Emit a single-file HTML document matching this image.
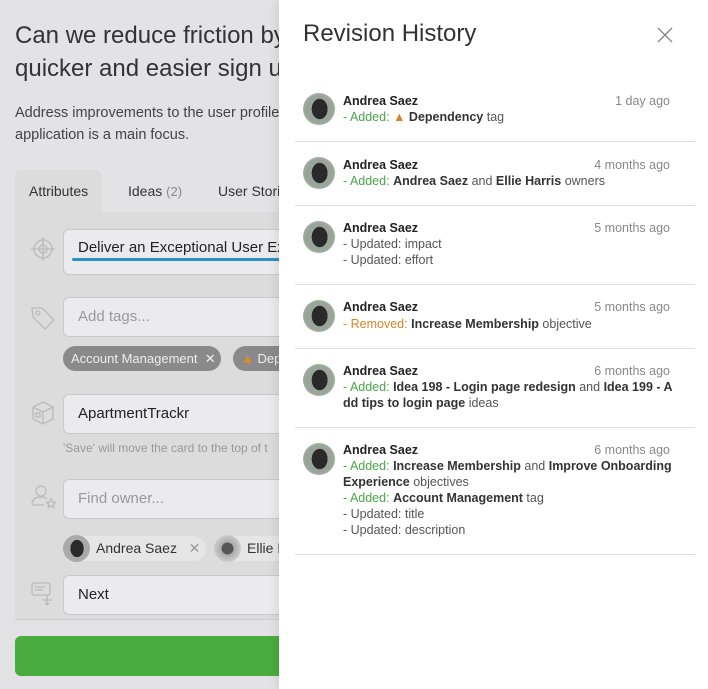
<!DOCTYPE html>
<html><head><style>
*{margin:0;padding:0;box-sizing:border-box}
body{width:708px;height:689px;overflow:hidden;background:#e3e2e5;font-family:"Liberation Sans","DejaVu Sans",sans-serif;position:relative;color:#333}
.a{position:absolute;white-space:nowrap}
.inp{position:absolute;left:63px;width:240px;background:#ebeaec;border:1px solid #c9c9c9;border-radius:6px;font-size:15px;color:#222;padding-left:14px;white-space:nowrap;overflow:hidden}
.ph{color:#999}
.ic{position:absolute;left:30px;color:#b5b5b5}
.panel{position:absolute;left:279px;top:0;width:429px;height:689px;background:#fff;box-shadow:-3px 0 8px rgba(0,0,0,.08)}
.e{position:absolute;left:16px;width:400px;border-bottom:1px solid #dedede;font-size:12.5px;line-height:16px}
.av{position:absolute;left:8px;width:32px;height:32px;border-radius:50%;background:radial-gradient(ellipse 35% 45% at 52% 50%,#2a2a2a 0 70%,transparent 72%),radial-gradient(circle at 50% 50%,#9aa59a 0 60%,#c8c8c8 100%)}
.nm{position:absolute;left:48px;font-weight:bold;color:#222}
.tm{position:absolute;right:25px;color:#888}
.ln{position:absolute;left:48px;right:20px;color:#555}
.g{color:#4aa84a}.o{color:#d9832a}
b{color:#333}
</style></head><body>
<div class="a" style="left:15px;top:19px;font-size:24px;line-height:33px;color:#333">Can we reduce friction by<br>quicker and easier sign up</div>
<div class="a" style="left:15px;top:102px;font-size:14.5px;line-height:22px;color:#444">Address improvements to the user profile<br>application is a main focus.</div>
<div class="a" style="left:15px;top:170px;width:87px;height:44px;background:#dcdcdd;border-radius:6px 6px 0 0"></div>
<div class="a" style="left:29px;top:183px;font-size:14px;color:#333">Attributes</div>
<div class="a" style="left:128px;top:183px;font-size:14px;color:#333">Ideas <span style="color:#888;font-size:13px">(2)</span></div>
<div class="a" style="left:218px;top:183px;font-size:14px;color:#333">User Stori</div>
<div class="a" style="left:15px;top:212px;width:270px;height:408px;background:#dcdcdd;border-bottom:1px solid #cfcfcf"></div>
<div class="inp" style="top:229px;height:46px;padding-top:9px">Deliver an Exceptional User Experi<div class="a" style="left:8px;top:28px;width:240px;height:3px;background:#2b8fc8;border-radius:2px"></div></div>
<svg class="ic" style="top:236px" width="26" height="26" viewBox="0 0 26 26" fill="none" stroke="#bbb" stroke-width="1.3"><circle cx="13" cy="13" r="9"/><circle cx="13" cy="13" r="4"/><path d="M13 1v24M1 13h24"/></svg>
<div class="inp ph" style="top:297px;height:40px;padding-top:10px">Add tags...</div>
<svg class="ic" style="top:305px" width="26" height="26" viewBox="0 0 26 26" fill="none" stroke="#bbb" stroke-width="1.3"><path d="M2 3l10 0 12 12-9 9L3 12z"/><circle cx="8" cy="8" r="2"/></svg>
<div class="a" style="left:63px;top:346px;width:158px;height:25px;background:#8a8a8a;border-radius:13px;color:#eee;font-size:13px;padding:5px 0 0 8px">Account Management&nbsp; ✕</div>
<div class="a" style="left:233px;top:346px;width:60px;height:25px;background:#8a8a8a;border-radius:13px;color:#eee;font-size:13px;padding:5px 0 0 8px"><span style="color:#e08a20">▲</span> Dep</div>
<div class="inp" style="top:394px;height:40px;padding-top:10px">ApartmentTrackr</div>
<svg class="ic" style="top:400px" width="26" height="26" viewBox="0 0 26 26" fill="none" stroke="#bbb" stroke-width="1.3"><path d="M3 7l10-5 10 5v12l-10 5-10-5z M3 7l10 5 10-5 M13 12v12"/><rect x="6" y="13" width="4" height="4"/></svg>
<div class="a" style="left:63px;top:441px;font-size:12px;color:#999">'Save' will move the card to the top of t</div>
<div class="inp ph" style="top:479px;height:40px;padding-top:10px">Find owner...</div>
<svg class="ic" style="top:483px" width="28" height="28" viewBox="0 0 28 28" fill="none" stroke="#bbb" stroke-width="1.3"><circle cx="11" cy="8" r="5"/><path d="M2 22c0-6 4-8 9-8 3 0 5 1 6 2M2 22h12"/><path d="M21 16l1.5 3 3 .4-2.2 2 .6 3-2.9-1.5-2.9 1.5.6-3-2.2-2 3-.4z"/></svg>
<div class="a" style="left:63px;top:536px;width:143px;height:25px;background:#e6e6e7;border-radius:13px;font-size:14px;color:#333;padding:4px 0 0 33px">Andrea Saez&nbsp;&nbsp; <span style="color:#999">✕</span></div>
<div class="a" style="left:63px;top:535px;width:27px;height:27px;border-radius:50%;background:radial-gradient(ellipse 35% 45% at 52% 50%,#2a2a2a 0 70%,transparent 72%),#aaa"></div>
<div class="a" style="left:214px;top:536px;width:80px;height:25px;background:#e6e6e7;border-radius:13px;font-size:14px;color:#333;padding:4px 0 0 33px">Ellie H</div>
<div class="a" style="left:214px;top:535px;width:27px;height:27px;border-radius:50%;background:radial-gradient(circle at 50% 50%,#555 0 30%,#aaa 32%,#ccc 70%)"></div>
<div class="inp" style="top:575px;height:40px;padding-top:10px">Next</div>
<svg class="ic" style="top:581px" width="26" height="26" viewBox="0 0 26 26" fill="none" stroke="#bbb" stroke-width="1.3"><rect x="2" y="2" width="18" height="12" rx="2"/><path d="M5 6h10M5 9h8M17 14v10M12 19h10M15 22l2 2 2-2"/></svg>
<div class="a" style="left:15px;top:636px;width:280px;height:40px;background:#4aac3e;border-radius:6px"></div>

<div class="panel">
<div class="a" style="left:24px;top:20px;font-size:24px;color:#333">Revision History</div>
<svg class="a" style="left:378px;top:27px" width="16" height="16" viewBox="0 0 16 16" stroke="#888" stroke-width="1.4"><path d="M1 1l14 14M15 1L1 15"/></svg>
<div class="e" style="top:79px;height:63px"><div class="av" style="top:14px"></div><div class="nm" style="top:14px">Andrea Saez</div><div class="tm" style="top:14px">1 day ago</div><div class="ln" style="top:30px"><span class="g">- Added:</span> <span class="o">▲</span> <b>Dependency</b> tag</div></div>
<div class="e" style="top:142px;height:64px"><div class="av" style="top:15px"></div><div class="nm" style="top:15px">Andrea Saez</div><div class="tm" style="top:15px">4 months ago</div><div class="ln" style="top:31px"><span class="g">- Added:</span> <b>Andrea Saez</b> and <b>Ellie Harris</b> owners</div></div>
<div class="e" style="top:206px;height:79px"><div class="av" style="top:15px"></div><div class="nm" style="top:14px">Andrea Saez</div><div class="tm" style="top:14px">5 months ago</div><div class="ln" style="top:30px">- Updated: impact<br>- Updated: effort</div></div>
<div class="e" style="top:285px;height:64px"><div class="av" style="top:15px"></div><div class="nm" style="top:14px">Andrea Saez</div><div class="tm" style="top:14px">5 months ago</div><div class="ln" style="top:31px"><span class="o">- Removed:</span> <b>Increase Membership</b> objective</div></div>
<div class="e" style="top:349px;height:79px"><div class="av" style="top:15px"></div><div class="nm" style="top:14px">Andrea Saez</div><div class="tm" style="top:14px">6 months ago</div><div class="ln" style="top:30px;word-break:break-all"><span class="g">- Added:</span> <b>Idea 198 - Login page redesign</b> and <b>Idea 199 - Add tips to login page</b> ideas</div></div>
<div class="e" style="top:428px;height:127px"><div class="av" style="top:15px"></div><div class="nm" style="top:14px">Andrea Saez</div><div class="tm" style="top:14px">6 months ago</div><div class="ln" style="top:30px;word-break:break-all"><span class="g">- Added:</span> <b>Increase Membership</b> and <b>Improve Onboarding Experience</b> objectives<br><span class="g">- Added:</span> <b>Account Management</b> tag<br>- Updated: title<br>- Updated: description</div></div>
</div>
</body></html>
